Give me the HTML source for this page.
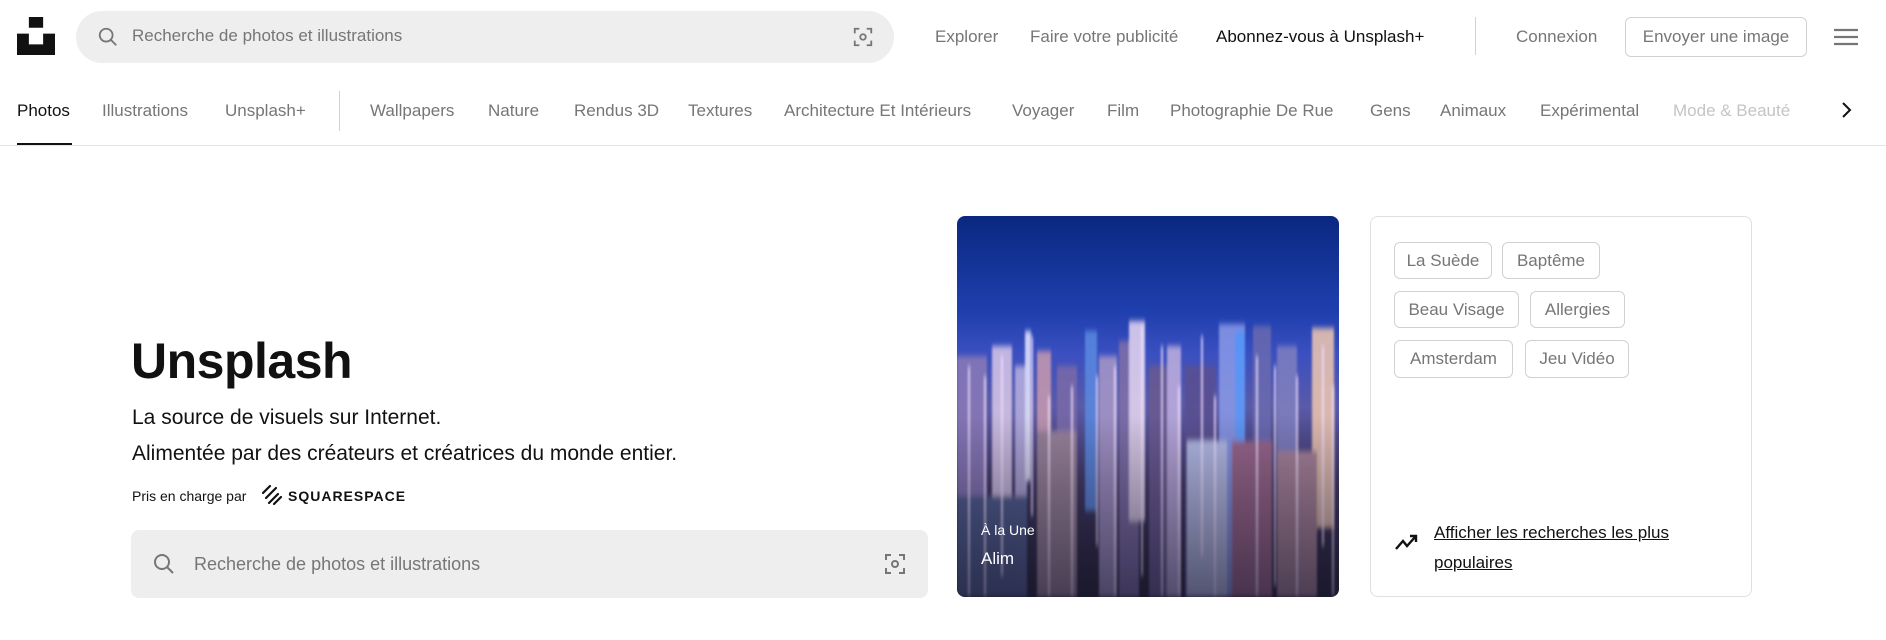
<!DOCTYPE html>
<html><head><meta charset="utf-8"><style>
*{margin:0;padding:0;box-sizing:border-box}
body{width:1886px;height:640px;overflow:hidden;background:#fff;font-family:"Liberation Sans",sans-serif;color:#111;position:relative}
.a{position:absolute;white-space:nowrap}
.nav{font-size:17px;color:#767676;top:27px}
.tab{font-size:17px;color:#767676;top:101px}
.tag{position:absolute;border:1px solid #d1d1d1;border-radius:6px;font-size:17px;color:#767676;display:flex;align-items:center;justify-content:center}
</style></head><body>
<svg class="a" style="left:17px;top:17px" width="38" height="38" viewBox="0 0 32 32"><path d="M10 9V0h12v9H10zm12 5h10v18H0V14h10v9h12v-9z" fill="#111"/></svg>
<div class="a" style="left:76px;top:11px;width:818px;height:52px;background:#eee;border-radius:26px"></div>
<svg class="a" style="left:97px;top:26px" width="22" height="22" viewBox="0 0 24 24" fill="none" stroke="#767676" stroke-width="2"><circle cx="10" cy="10" r="7"/><path d="M15 15l6 6"/></svg>
<div class="a" style="left:132px;top:26px;font-size:17px;color:#767676">Recherche de photos et illustrations</div>
<svg class="a" style="left:852px;top:26px" width="22" height="22" viewBox="0 0 24 24" fill="none" stroke="#767676" stroke-width="2"><path d="M3 8V3h5M16 3h5v5M21 16v5h-5M8 21H3v-5"/><circle cx="12" cy="12" r="3"/></svg>
<div class="a nav" style="left:935px">Explorer</div>
<div class="a nav" style="left:1030px">Faire votre publicité</div>
<div class="a nav" style="left:1216px;color:#111">Abonnez-vous à Unsplash+</div>
<div class="a" style="left:1475px;top:17px;width:1px;height:38px;background:#d1d1d1"></div>
<div class="a nav" style="left:1516px">Connexion</div>
<div class="a" style="left:1625px;top:17px;width:182px;height:40px;border:1px solid #d1d1d1;border-radius:6px;font-size:17px;color:#767676;display:flex;align-items:center;justify-content:center">Envoyer une image</div>
<svg class="a" style="left:1834px;top:27px" width="25" height="20" viewBox="0 0 25 20"><path d="M0 3h24M0 10h24M0 17h24" stroke="#767676" stroke-width="2.2"/></svg>
<div class="a tab" style="left:17px;color:#111">Photos</div>
<div class="a" style="left:17px;top:143px;width:55px;height:2px;background:#111"></div>
<div class="a tab" style="left:102px">Illustrations</div>
<div class="a tab" style="left:225px">Unsplash+</div>
<div class="a" style="left:339px;top:91px;width:1px;height:40px;background:#d1d1d1"></div>
<div class="a tab" style="left:370px">Wallpapers</div>
<div class="a tab" style="left:488px">Nature</div>
<div class="a tab" style="left:574px">Rendus 3D</div>
<div class="a tab" style="left:688px">Textures</div>
<div class="a tab" style="left:784px">Architecture Et Intérieurs</div>
<div class="a tab" style="left:1012px">Voyager</div>
<div class="a tab" style="left:1107px">Film</div>
<div class="a tab" style="left:1170px">Photographie De Rue</div>
<div class="a tab" style="left:1370px">Gens</div>
<div class="a tab" style="left:1440px">Animaux</div>
<div class="a tab" style="left:1540px">Expérimental</div>
<div class="a tab" style="left:1673px;color:#c4c4c4">Mode &amp; Beauté</div>
<svg class="a" style="left:1838px;top:100px" width="16" height="20" viewBox="0 0 16 20"><path d="M5 3l7 7-7 7" fill="none" stroke="#111" stroke-width="2"/></svg>
<div class="a" style="left:0;top:145px;width:1886px;height:1px;background:#e5e5e5"></div>
<div class="a" style="left:131px;top:332px;font-size:50px;font-weight:bold;color:#111;letter-spacing:-0.5px">Unsplash</div>
<div class="a" style="left:132px;top:406px;font-size:21px">La source de visuels sur Internet.</div>
<div class="a" style="left:132px;top:442px;font-size:21px">Alimentée par des créateurs et créatrices du monde entier.</div>
<div class="a" style="left:132px;top:488px;font-size:14px">Pris en charge par</div>
<svg class="a" style="left:260px;top:484px" width="24" height="22" viewBox="0 0 24 22" fill="none" stroke="#111" stroke-width="2.2" stroke-linecap="round"><path d="M3 9l7-7M6 14l10-10M9 19l9-9M14 20l7-7"/></svg>
<div class="a" style="left:288px;top:488px;font-size:14px;font-weight:bold;letter-spacing:1px">SQUARESPACE</div>
<div class="a" style="left:131px;top:530px;width:797px;height:68px;background:#eee;border-radius:8px"></div>
<svg class="a" style="left:152px;top:552px" width="24" height="24" viewBox="0 0 24 24" fill="none" stroke="#767676" stroke-width="2"><circle cx="10" cy="10" r="7"/><path d="M15 15l6 6"/></svg>
<div class="a" style="left:194px;top:554px;font-size:18px;color:#767676">Recherche de photos et illustrations</div>
<svg class="a" style="left:883px;top:552px" width="24" height="24" viewBox="0 0 24 24" fill="none" stroke="#767676" stroke-width="2"><path d="M3 8V3h5M16 3h5v5M21 16v5h-5M8 21H3v-5"/><circle cx="12" cy="12" r="3"/></svg>
<div class="a" style="left:957px;top:216px;width:382px;height:381px;border-radius:8px;overflow:hidden">
<svg width="382" height="381" viewBox="0 0 382 381">
<defs>
<linearGradient id="sky" x1="0" y1="0" x2="0" y2="1">
<stop offset="0" stop-color="#0a2880"/><stop offset="0.25" stop-color="#1f3fae"/><stop offset="0.36" stop-color="#3a4fc0"/><stop offset="0.5" stop-color="#5a5aa8"/><stop offset="0.7" stop-color="#3e3560"/><stop offset="1" stop-color="#1c1a28"/>
</linearGradient>
<linearGradient id="dk" x1="0" y1="0" x2="0" y2="1">
<stop offset="0" stop-color="#1a1830" stop-opacity="0"/><stop offset="1" stop-color="#1a1830" stop-opacity="0.6"/>
</linearGradient>
<filter id="bl"><feGaussianBlur stdDeviation="1 3"/></filter>
</defs>
<rect width="382" height="381" fill="url(#sky)"/>
<g filter="url(#bl)" opacity="0.85">
<rect x="0" y="140" width="30" height="241" fill="#8a7ab8"/>
<rect x="35" y="130" width="20" height="251" fill="#d8c8e8"/>
<rect x="58" y="150" width="12" height="231" fill="#b8b0e0"/>
<rect x="68" y="115" width="6" height="150" fill="#e8e8ff"/>
<rect x="80" y="135" width="14" height="246" fill="#c89ab0"/>
<rect x="100" y="150" width="20" height="231" fill="#7a6aa8"/>
<rect x="128" y="115" width="12" height="180" fill="#5a8ae0"/>
<rect x="142" y="140" width="18" height="241" fill="#a898c8"/>
<rect x="162" y="125" width="20" height="256" fill="#8070a8"/>
<rect x="172" y="105" width="16" height="200" fill="#e8d8f0"/>
<rect x="192" y="150" width="20" height="231" fill="#6a5a90"/>
<rect x="210" y="130" width="14" height="251" fill="#c0b0e0"/>
<rect x="228" y="150" width="30" height="231" fill="#5a5090"/>
<rect x="262" y="108" width="26" height="273" fill="#8a9ae8"/>
<rect x="278" y="115" width="10" height="120" fill="#60a0ff"/>
<rect x="296" y="110" width="18" height="271" fill="#6a6ab0"/>
<rect x="320" y="130" width="20" height="251" fill="#8080c0"/>
<rect x="355" y="112" width="22" height="200" fill="#f0c8b0"/>
<rect x="230" y="225" width="40" height="156" fill="#c0c8f0"/>
<rect x="275" y="225" width="40" height="156" fill="#a06888"/>
<rect x="320" y="235" width="40" height="146" fill="#b08898"/>
<rect x="80" y="215" width="40" height="166" fill="#a08898"/>
<rect x="0" y="280" width="70" height="101" fill="#506090"/>
</g>
<g stroke-width="2" opacity="0.8" filter="url(#bl)">
<path d="M12 150V380M28 160V380M45 140V360M75 120V300M92 180V380M115 170V380M140 160V330M158 150V380M185 110V360M205 130V380M222 170V380M245 120V340M258 180V380M300 140V380M318 150V370M340 160V380M366 130V330M376 170V380" stroke="#f0e0ff"/>
</g>
<rect x="0" y="200" width="382" height="181" fill="url(#dk)"/>
<text x="24" y="319" fill="#fff" font-size="14" font-family="Liberation Sans">À la Une</text>
<text x="24" y="348" fill="#fff" font-size="17" font-family="Liberation Sans">Alim</text>
</svg>
</div>
<div class="a" style="left:1370px;top:216px;width:382px;height:381px;border:1px solid #e0e0e0;border-radius:8px"></div>
<div class="tag" style="left:1394px;top:242px;width:98px;height:37px">La Suède</div>
<div class="tag" style="left:1502px;top:242px;width:98px;height:37px">Baptême</div>
<div class="tag" style="left:1394px;top:291px;width:125px;height:37px">Beau Visage</div>
<div class="tag" style="left:1530px;top:291px;width:95px;height:37px">Allergies</div>
<div class="tag" style="left:1394px;top:340px;width:119px;height:38px">Amsterdam</div>
<div class="tag" style="left:1525px;top:340px;width:104px;height:38px">Jeu Vidéo</div>
<svg class="a" style="left:1395px;top:532px" width="26" height="20" viewBox="0 0 26 20" fill="none" stroke="#111" stroke-width="2.4"><path d="M1 17l7-8 4 5 9-10M15 4h6v6"/></svg>
<div class="a" style="left:1434px;top:518px;font-size:17px;line-height:30px;color:#111;text-decoration:underline">Afficher les recherches les plus<br>populaires</div>
</body></html>
